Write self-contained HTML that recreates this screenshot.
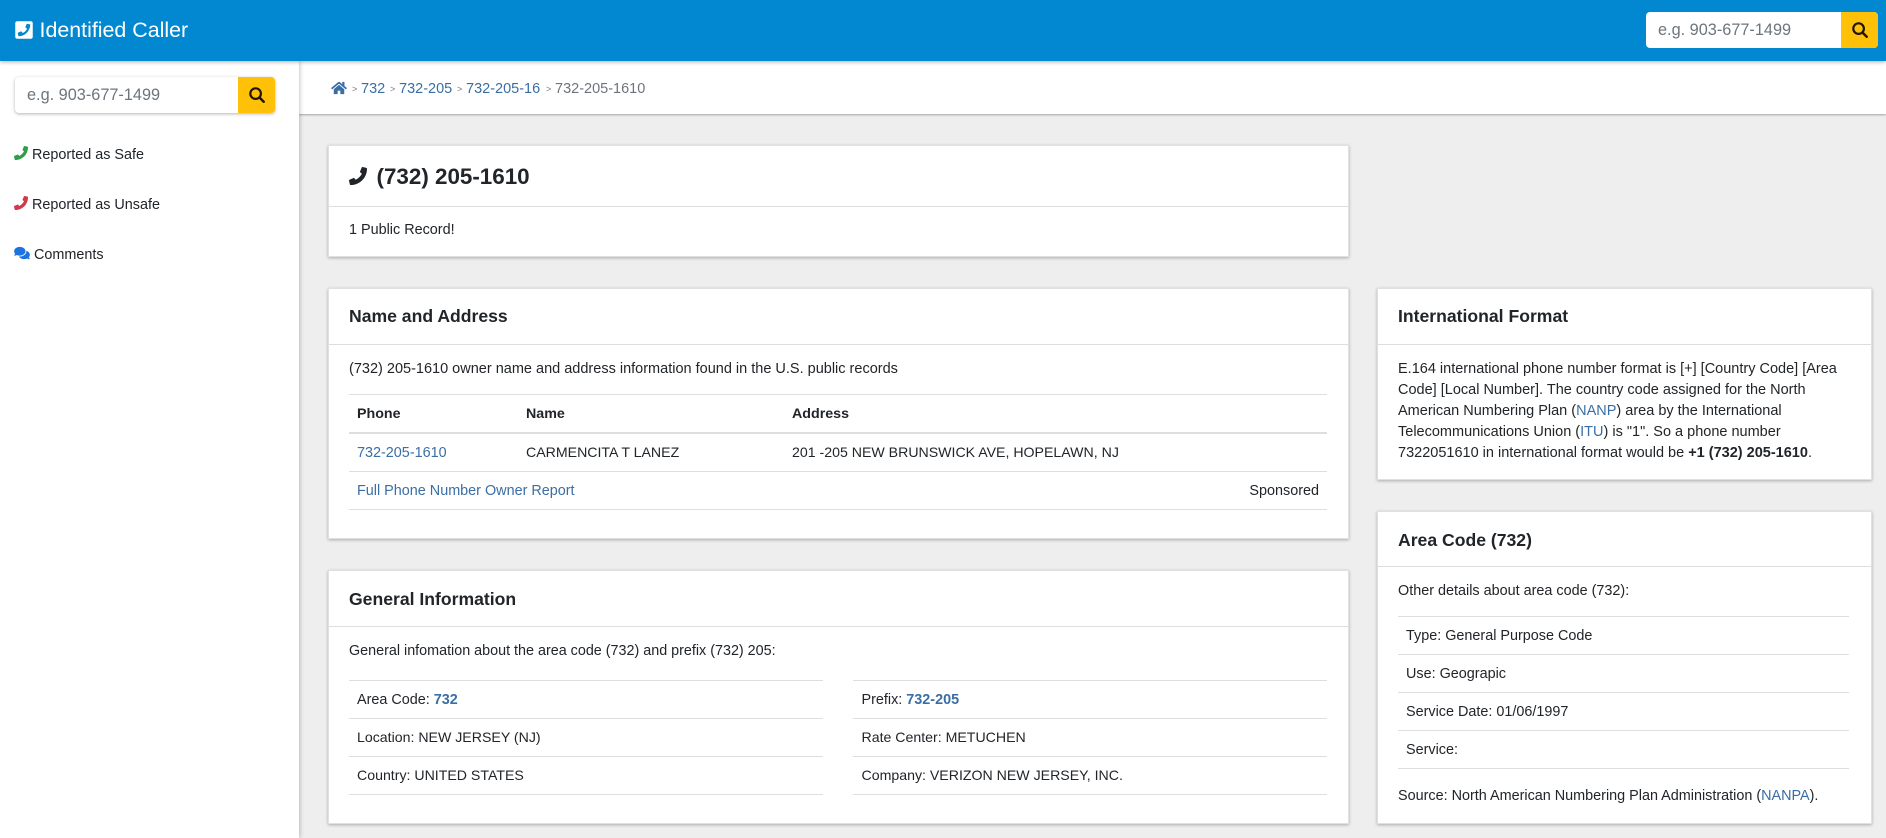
<!DOCTYPE html>
<html lang="en">
<head>
<meta charset="utf-8">
<title>(732) 205-1610 - Identified Caller</title>
<style>
html,body{margin:0;padding:0;width:1886px;height:838px;overflow:hidden;background:#eeeeee;font-family:"Liberation Sans",Arial,sans-serif;font-size:14.4px;color:#212529}
*{box-sizing:border-box}
.abs,.t,.l,.card,.hr{position:absolute}
.t{white-space:nowrap;line-height:21px;margin-top:1px}
.c{font-size:14.15px;margin-top:0}
.s{margin-top:2px}
.bc{font-size:14.5px}
.w{font-size:14.5px}
a{color:#3a6ea5;text-decoration:none}
.card{background:#fff;border:1px solid #e0e0e0;box-shadow:0 1px 3px rgba(0,0,0,.28)}
.hr{height:1px;background:#dedede}
h2{position:absolute;margin:0;font-size:17.6px;font-weight:700;line-height:22px;white-space:nowrap}
svg{position:absolute;display:block}
.sep{position:absolute;font-size:9px;color:#777;line-height:12px}
.search{position:absolute;height:36px;background:#fff;border-radius:4px;overflow:hidden}
.search .ph{position:absolute;left:12px;top:7px;line-height:22px;font-size:16.3px;color:#6c757d;white-space:nowrap}
.search .btn{position:absolute;right:0;top:0;width:37px;height:36px;background:#ffc107}
</style>
</head>
<body>

<!-- main breadcrumb bar -->
<div class="abs" style="left:299px;top:61px;width:1587px;height:53px;background:#fff;box-shadow:0 1px 2px rgba(0,0,0,.32)"></div>
<svg style="left:331px;top:81px" width="16" height="14" viewBox="0 0 576 512" fill="#3a6ea5"><path d="M280.37 148.26L96 300.11V464a16 16 0 0 0 16 16l112.06-.29a16 16 0 0 0 15.92-16V368a16 16 0 0 1 16-16h64a16 16 0 0 1 16 16v95.64a16 16 0 0 0 16 16.05L464 480a16 16 0 0 0 16-16V300L295.67 148.26a12.19 12.19 0 0 0-15.3 0zM571.6 251.47L488 182.56V44.05a12 12 0 0 0-12-12h-56a12 12 0 0 0-12 12v72.61L318.47 43a48 48 0 0 0-61 0L4.34 251.47a12 12 0 0 0-1.6 16.9l25.5 31A12 12 0 0 0 45.15 301l235.22-193.74a12.19 12.19 0 0 1 15.3 0L530.9 301a12 12 0 0 0 16.9-1.6l25.5-31a12 12 0 0 0-1.7-16.93z"/></svg>
<span class="sep" style="left:352px;top:83px">&gt;</span>
<a class="t bc" style="left:361px;top:78px" href="#">732</a>
<span class="sep" style="left:390px;top:83px">&gt;</span>
<a class="t bc" style="left:399px;top:78px" href="#">732-205</a>
<span class="sep" style="left:457px;top:83px">&gt;</span>
<a class="t bc" style="left:466px;top:78px" href="#">732-205-16</a>
<span class="sep" style="left:546px;top:83px">&gt;</span>
<span class="t bc" style="left:555px;top:78px;color:#6c757d">732-205-1610</span>

<!-- sidebar -->
<div class="abs" style="left:0;top:61px;width:299px;height:777px;background:#fff;box-shadow:0 0 5px rgba(0,0,0,.32)"></div>

<!-- header -->
<div class="abs" style="left:0;top:0;width:1886px;height:61px;background:#0288d1;box-shadow:0 1px 4px rgba(0,0,0,.32)"></div>
<svg style="left:15px;top:20px" width="18" height="20" viewBox="0 0 448 512" fill="#fff"><path d="M400 32H48C21.49 32 0 53.49 0 80v352c0 26.51 21.49 48 48 48h352c26.51 0 48-21.49 48-48V80c0-26.51-21.49-48-48-48zM94 416c-7.033 0-13.057-4.873-14.616-11.627l-14.998-65a15 15 0 0 1 8.707-17.16l69.998-29.999a15 15 0 0 1 17.518 4.289l30.997 37.885c48.944-22.963 88.297-62.858 110.781-110.78l-37.886-30.997a15.001 15.001 0 0 1-4.289-17.518l30-69.998a15.001 15.001 0 0 1 17.16-8.707l65 14.998C378.613 95.943 384 101.967 384 109c0 160.292-129.945 307-290 307z"/></svg>
<div class="t" style="margin-top:0;left:39.5px;top:15px;font-size:21.4px;line-height:30px;color:#fff">Identified Caller</div>

<div class="search" style="left:1646px;top:12px;width:232px">
  <span class="ph">e.g. 903-677-1499</span>
  <span class="btn"><svg style="left:11px;top:10px" width="16" height="16" viewBox="0 0 16 16" fill="none" stroke="#1f1500"><circle cx="6.6" cy="6.6" r="5.3" stroke-width="2.2"/><path d="M10.6 10.6L14.7 14.7" stroke-width="2.5" stroke-linecap="round"/></svg></span>
</div>

<!-- sidebar content -->
<div class="search" style="left:15px;top:77px;width:260px;box-shadow:0 1px 3px rgba(0,0,0,.3)">
  <span class="ph">e.g. 903-677-1499</span>
  <span class="btn"><svg style="left:11px;top:10px" width="16" height="16" viewBox="0 0 16 16" fill="none" stroke="#1f1500"><circle cx="6.6" cy="6.6" r="5.3" stroke-width="2.2"/><path d="M10.6 10.6L14.7 14.7" stroke-width="2.5" stroke-linecap="round"/></svg></span>
</div>
<svg style="left:14px;top:146px" width="14" height="14" viewBox="0 0 512 512" fill="#2e9e4b"><path d="M493.4 24.6l-104-24c-11.3-2.6-22.9 3.3-27.5 13.9l-48 112c-4.2 9.8-1.4 21.3 6.9 28l60.6 49.6c-36 76.7-98.9 140.5-177.2 177.2l-49.6-60.6c-6.8-8.3-18.2-11.1-28-6.9l-112 48C3.9 366.5-2 378.1.6 389.4l24 104C27.1 504.2 36.7 512 48 512c256.1 0 464-207.5 464-464 0-11.2-7.7-20.9-18.6-23.4z"/><path d="M430 100C420 260 260 420 90 430" fill="none" stroke="#2e9e4b" stroke-width="80"/></svg>
<div class="t s" style="left:32px;top:143px">Reported as Safe</div>
<svg style="left:14px;top:196px" width="14" height="14" viewBox="0 0 512 512" fill="#d13a48"><path d="M493.4 24.6l-104-24c-11.3-2.6-22.9 3.3-27.5 13.9l-48 112c-4.2 9.8-1.4 21.3 6.9 28l60.6 49.6c-36 76.7-98.9 140.5-177.2 177.2l-49.6-60.6c-6.8-8.3-18.2-11.1-28-6.9l-112 48C3.9 366.5-2 378.1.6 389.4l24 104C27.1 504.2 36.7 512 48 512c256.1 0 464-207.5 464-464 0-11.2-7.7-20.9-18.6-23.4z"/><path d="M430 100C420 260 260 420 90 430" fill="none" stroke="#d13a48" stroke-width="80"/></svg>
<div class="t s" style="left:32px;top:193px">Reported as Unsafe</div>
<svg style="left:14px;top:246px" width="16" height="14" viewBox="0 0 576 512" fill="#1e73e0"><path d="M416 192c0-88.4-93.1-160-208-160S0 103.6 0 192c0 34.3 14.1 65.9 38 92-13.4 30.2-35.5 54.2-35.8 54.5-2.2 2.3-2.8 5.7-1.5 8.7S4.8 352 8 352c36.6 0 66.9-12.3 88.7-25 32.2 15.7 70.3 25 111.3 25 114.9 0 208-71.6 208-160zm122 220c23.9-26 38-57.7 38-92 0-66.9-53.5-124.2-129.3-148.1.9 6.6 1.3 13.3 1.3 20.1 0 105.9-107.7 192-240 192-10.8 0-21.3-.8-31.7-1.9C207.8 439.6 281.8 480 368 480c41 0 79.1-9.2 111.3-25 21.8 12.7 52.1 25 88.7 25 3.2 0 6.1-1.9 7.3-4.8 1.3-2.9.7-6.3-1.5-8.7-.3-.3-22.4-24.2-35.8-54.5z"/></svg>
<div class="t s" style="left:34px;top:243px">Comments</div>

<!-- card 1 -->
<div class="card" style="left:328px;top:145px;width:1021px;height:112px"></div>
<div class="hr" style="left:329px;top:206px;width:1019px"></div>
<svg style="left:349px;top:167px" width="18" height="18" viewBox="0 0 512 512" fill="#212529"><path d="M493.4 24.6l-104-24c-11.3-2.6-22.9 3.3-27.5 13.9l-48 112c-4.2 9.8-1.4 21.3 6.9 28l60.6 49.6c-36 76.7-98.9 140.5-177.2 177.2l-49.6-60.6c-6.8-8.3-18.2-11.1-28-6.9l-112 48C3.9 366.5-2 378.1.6 389.4l24 104C27.1 504.2 36.7 512 48 512c256.1 0 464-207.5 464-464 0-11.2-7.7-20.9-18.6-23.4z"/><path d="M430 100C420 260 260 420 90 430" fill="none" stroke="#212529" stroke-width="80"/></svg>
<div class="t" style="margin-top:0;left:376.5px;top:162px;font-size:22.4px;line-height:29px;font-weight:700">(732) 205-1610</div>
<div class="t" style="left:349px;top:219px">1 Public Record!</div>

<!-- Name and Address -->
<div class="card" style="left:328px;top:288px;width:1021px;height:251px"></div>
<div class="hr" style="left:329px;top:344px;width:1019px"></div>
<h2 style="left:349px;top:305px">Name and Address</h2>
<div class="t w" style="left:349px;top:357.5px">(732) 205-1610 owner name and address information found in the U.S. public records</div>
<div class="hr" style="left:349px;top:394px;width:978px"></div>
<div class="t" style="left:357px;top:403px;font-weight:700;font-size:14.25px">Phone</div>
<div class="t" style="left:526px;top:403px;font-weight:700;font-size:14.25px">Name</div>
<div class="t" style="left:792px;top:403px;font-weight:700;font-size:14.25px">Address</div>
<div class="hr" style="left:349px;top:432px;width:978px;height:2px"></div>
<a class="t" style="left:357px;top:442px" href="#">732-205-1610</a>
<div class="t c" style="left:526px;top:442px">CARMENCITA T LANEZ</div>
<div class="t c" style="left:792px;top:442px">201 -205 NEW BRUNSWICK AVE, HOPELAWN, NJ</div>
<div class="hr" style="left:349px;top:471px;width:978px"></div>
<a class="t" style="left:357px;top:480px" href="#">Full Phone Number Owner Report</a>
<div class="t" style="right:567px;top:480px">Sponsored</div>
<div class="hr" style="left:349px;top:509px;width:978px"></div>

<!-- General Information -->
<div class="card" style="left:328px;top:570px;width:1021px;height:254px"></div>
<div class="hr" style="left:329px;top:626px;width:1019px"></div>
<h2 style="left:349px;top:588px">General Information</h2>
<div class="t" style="left:349px;top:639.5px;font-size:14.35px">General infomation about the area code (732) and prefix (732) 205:</div>

<div class="hr" style="left:349px;top:680px;width:474px"></div>
<div class="t" style="left:357px;top:689px">Area Code: <a href="#" style="font-weight:700">732</a></div>
<div class="hr" style="left:349px;top:718px;width:474px"></div>
<div class="t c" style="left:357px;top:727px">Location: NEW JERSEY (NJ)</div>
<div class="hr" style="left:349px;top:756px;width:474px"></div>
<div class="t c" style="left:357px;top:765px">Country: UNITED STATES</div>
<div class="hr" style="left:349px;top:794px;width:474px"></div>

<div class="hr" style="left:853px;top:680px;width:474px"></div>
<div class="t" style="left:861.5px;top:689px">Prefix: <a href="#" style="font-weight:700">732-205</a></div>
<div class="hr" style="left:853px;top:718px;width:474px"></div>
<div class="t c" style="left:861.5px;top:727px">Rate Center: METUCHEN</div>
<div class="hr" style="left:853px;top:756px;width:474px"></div>
<div class="t c" style="left:861.5px;top:765px">Company: VERIZON NEW JERSEY, INC.</div>
<div class="hr" style="left:853px;top:794px;width:474px"></div>

<!-- International Format -->
<div class="card" style="left:1377px;top:288px;width:495px;height:192px"></div>
<div class="hr" style="left:1378px;top:344px;width:493px"></div>
<h2 style="left:1398px;top:305px">International Format</h2>
<div class="t w" style="left:1398px;top:357.5px">E.164 international phone number format is [+] [Country Code] [Area<br>Code] [Local Number]. The country code assigned for the North<br>American Numbering Plan (<a href="#">NANP</a>) area by the International<br>Telecommunications Union (<a href="#">ITU</a>) is "1". So a phone number<br>7322051610 in international format would be <b>+1 (732) 205-1610</b>.</div>

<!-- Area Code -->
<div class="card" style="left:1377px;top:511px;width:495px;height:313px"></div>
<div class="hr" style="left:1378px;top:566px;width:493px"></div>
<h2 style="left:1398px;top:529px">Area Code (732)</h2>
<div class="t" style="left:1398px;top:580px">Other details about area code (732):</div>
<div class="hr" style="left:1398px;top:616px;width:451px"></div>
<div class="t" style="left:1406px;top:625px">Type: General Purpose Code</div>
<div class="hr" style="left:1398px;top:654px;width:451px"></div>
<div class="t" style="left:1406px;top:663px">Use: Geograpic</div>
<div class="hr" style="left:1398px;top:692px;width:451px"></div>
<div class="t" style="left:1406px;top:701px">Service Date: 01/06/1997</div>
<div class="hr" style="left:1398px;top:730px;width:451px"></div>
<div class="t" style="left:1406px;top:739px">Service:</div>
<div class="hr" style="left:1398px;top:768px;width:451px"></div>
<div class="t" style="left:1398px;top:785px">Source: North American Numbering Plan Administration (<a href="#">NANPA</a>).</div>

</body>
</html>
